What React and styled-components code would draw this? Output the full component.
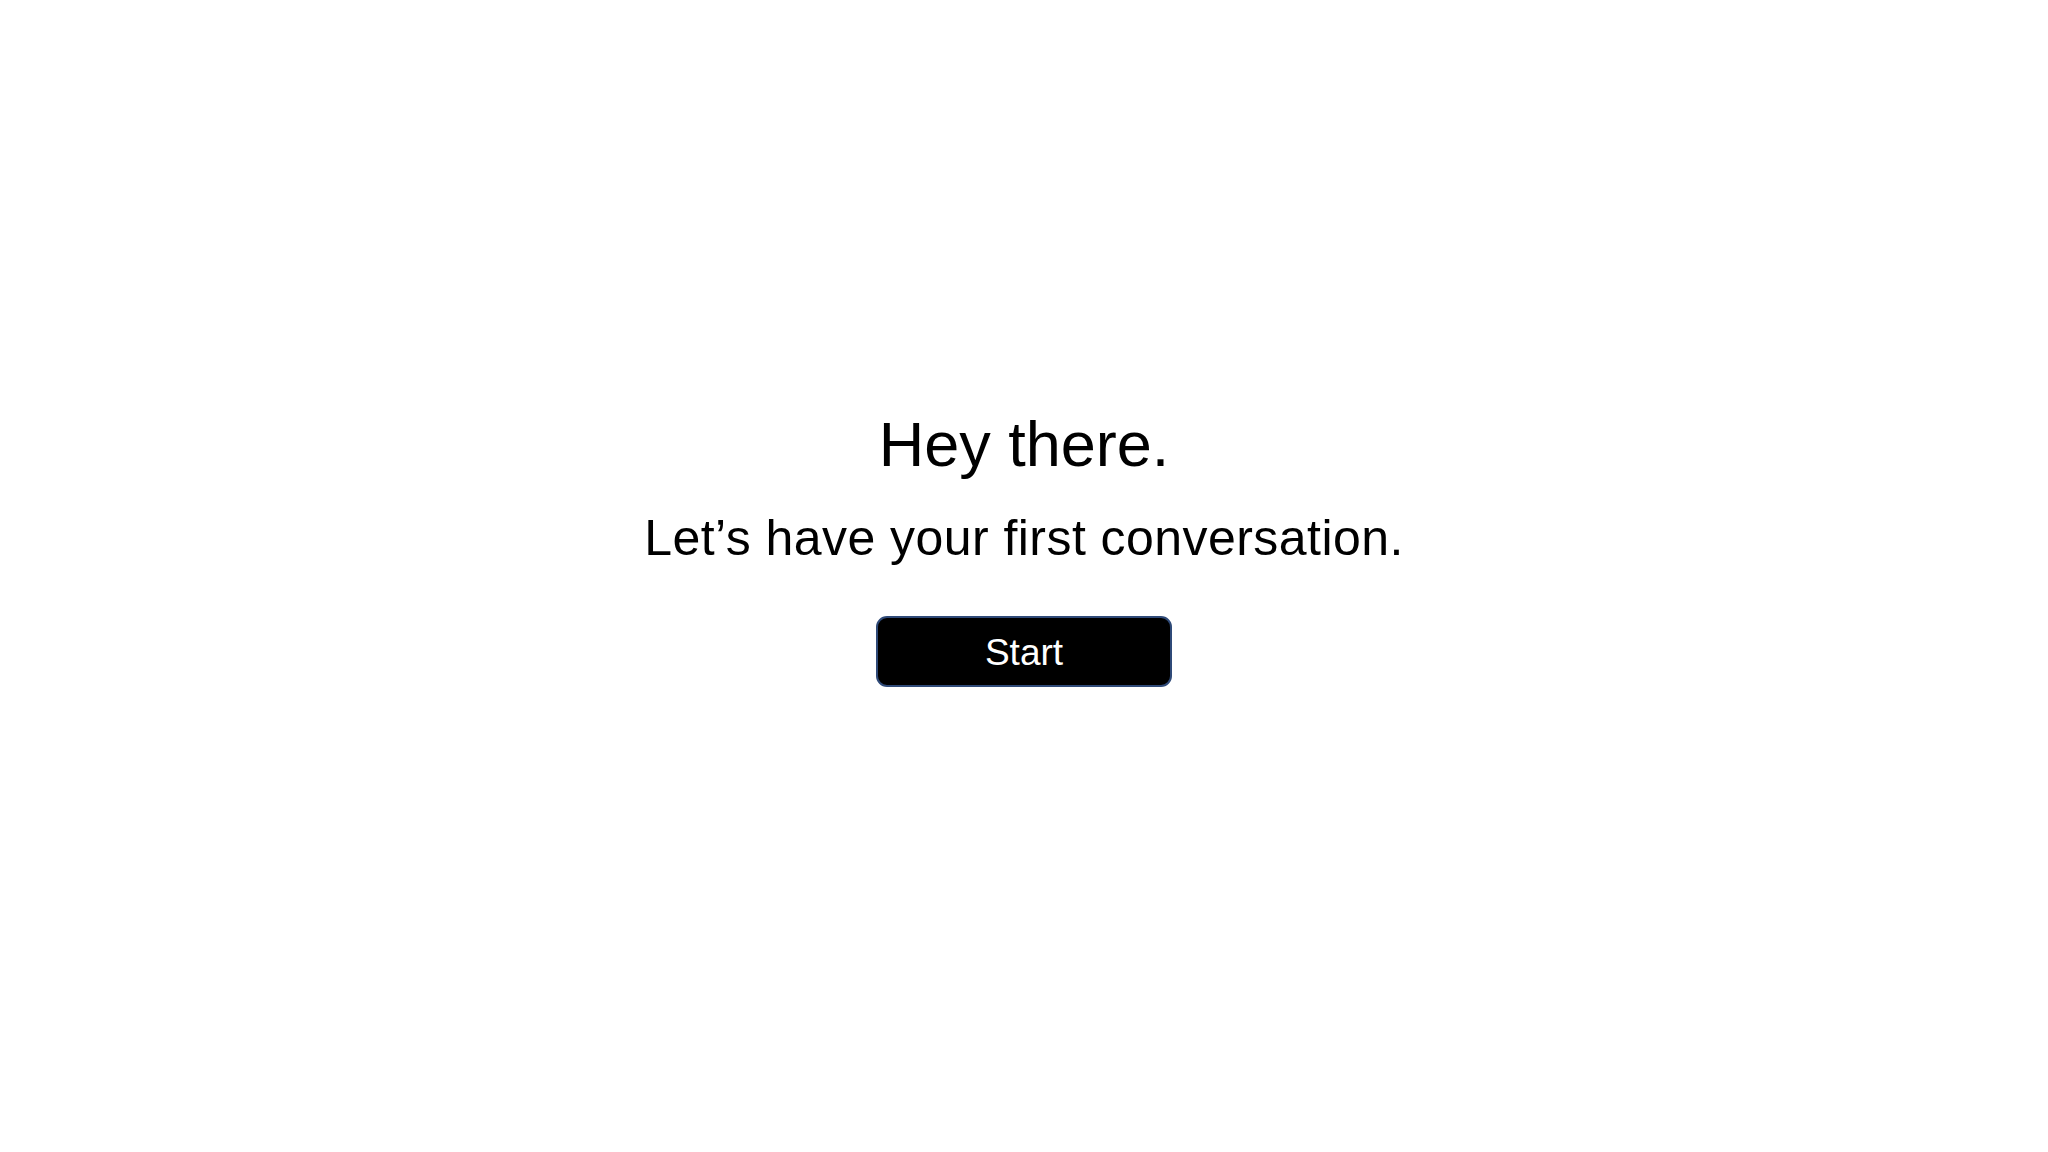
import React from "react";
import styled, { createGlobalStyle } from "styled-components";

const GlobalStyle = createGlobalStyle`
  html, body {
    margin: 0;
    padding: 0;
    background: #ffffff;
  }
  body {
    font-family: "Liberation Sans", Arial, Helvetica, sans-serif;
    color: #000000;
  }
`;

const Screen = styled.main`
  min-height: 100vh;
  box-sizing: border-box;
  padding-bottom: 59px;
  display: flex;
  flex-direction: column;
  align-items: center;
  justify-content: center;
`;

const Title = styled.h1`
  margin: 0;
  font-size: 63px;
  line-height: 76px;
  font-weight: 400;
  color: #000;
`;

const Subtitle = styled.p`
  margin: 26px 0 0;
  font-size: 50px;
  line-height: 60px;
  letter-spacing: 0.45px;
  font-weight: 400;
  color: #000;
`;

const StartButton = styled.button`
  margin-top: 48px;
  width: 296px;
  height: 71px;
  box-sizing: border-box;
  padding: 3px 0 0;
  display: flex;
  align-items: center;
  justify-content: center;
  background: #000;
  color: #fff;
  border: 2px solid #2f4a78;
  border-radius: 11px;
  font-family: "Liberation Sans", Arial, Helvetica, sans-serif;
  font-size: 37px;
  cursor: pointer;
`;

export default function App() {
  return (
    <>
      <GlobalStyle />
      <Screen>
        <Title>Hey there.</Title>
        <Subtitle>Let’s have your first conversation.</Subtitle>
        <StartButton type="button">Start</StartButton>
      </Screen>
    </>
  );
}
